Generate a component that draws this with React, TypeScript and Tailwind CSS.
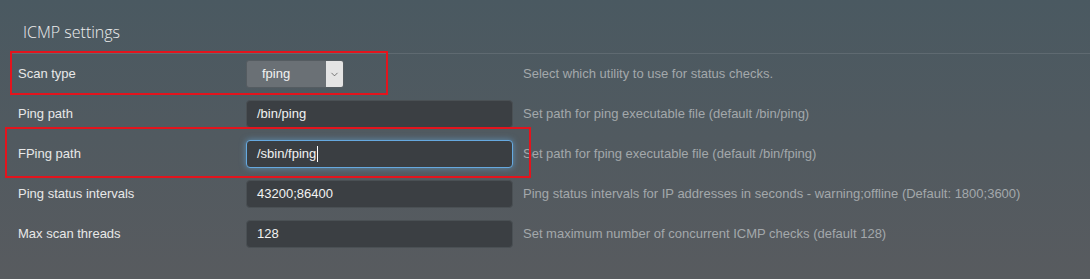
import { ChevronDown } from "lucide-react";

type Row = {
  label: string;
  value: string;
  help: string;
  kind: "select" | "input" | "focus";
};

const rows: Row[] = [
  { label: "Scan type", value: "fping", help: "Select which utility to use for status checks.", kind: "select" },
  { label: "Ping path", value: "/bin/ping", help: "Set path for ping executable file (default /bin/ping)", kind: "input" },
  { label: "FPing path", value: "/sbin/fping", help: "Set path for fping executable file (default /bin/fping)", kind: "focus" },
  { label: "Ping status intervals", value: "43200;86400", help: "Ping status intervals for IP addresses in seconds - warning;offline (Default: 1800;3600)", kind: "input" },
  { label: "Max scan threads", value: "128", help: "Set maximum number of concurrent ICMP checks (default 128)", kind: "input" },
];

function Field({ row }: { row: Row }) {
  if (row.kind === "select") {
    return (
      <div className="flex h-[28px] w-[98px] overflow-hidden rounded-[3px] border border-[#555c61] bg-[#6a7075]">
        <span className="flex-1 pl-[15px] text-[13px] leading-[26px] text-[#f2f2f2]">{row.value}</span>
        <span className="flex w-[17px] items-center justify-center bg-[#e4e4e4]">
          <ChevronDown size={11} strokeWidth={1.5} className="text-[#444]" />
        </span>
      </div>
    );
  }
  const focus = row.kind === "focus";
  return (
    <div
      className={
        focus
          ? "flex h-[28px] w-[267px] items-center rounded-[4px] border border-[#66a9e0] bg-[#3a3e42] pl-[10px] text-[13px] text-[#f2f2f2] shadow-[0_0_6px_rgba(102,175,233,0.6)]"
          : "flex h-[28px] w-[267px] items-center rounded-[4px] border border-[#4a5054] bg-[#3b3f43] pl-[10px] text-[13px] text-[#f2f2f2]"
      }
    >
      {row.value}
      {focus && <span className="ml-px h-[16px] w-px bg-white" />}
    </div>
  );
}

export default function App() {
  return (
    <div
      className="relative h-[279px] w-[1090px] overflow-hidden bg-gradient-to-b from-[#4a5961] to-[#585b5f] pl-[10px]"
      style={{ fontFamily: '"Liberation Sans", Arial, sans-serif' }}
    >
      <div className="flex h-[53px] items-end pb-[9px] pl-[13px]">
        <h2 className="text-[16px] font-light text-[#eeeeee]" style={{ fontFamily: '"Open Sans", sans-serif' }}>
          ICMP settings
        </h2>
      </div>
      <div className="border-t border-[#5f6a71]">
        {rows.map((row) => (
          <div key={row.label} className="flex h-[40px] items-center">
            <div className="w-[236px] pl-[8px] text-[13px] text-[#e8e8e8]">{row.label}</div>
            <div className="w-[267px]">
              <Field row={row} />
            </div>
            <div className="pl-[10px] text-[13px] text-[#a3a8ab]">{row.help}</div>
          </div>
        ))}
      </div>

      <div className="pointer-events-none absolute left-[10px] top-[51px] h-[44px] w-[378px] border-2 border-[#e3141d]" />
      <div className="pointer-events-none absolute left-[5px] top-[127px] h-[51px] w-[526px] border-2 border-[#e3141d]" />
    </div>
  );
}
